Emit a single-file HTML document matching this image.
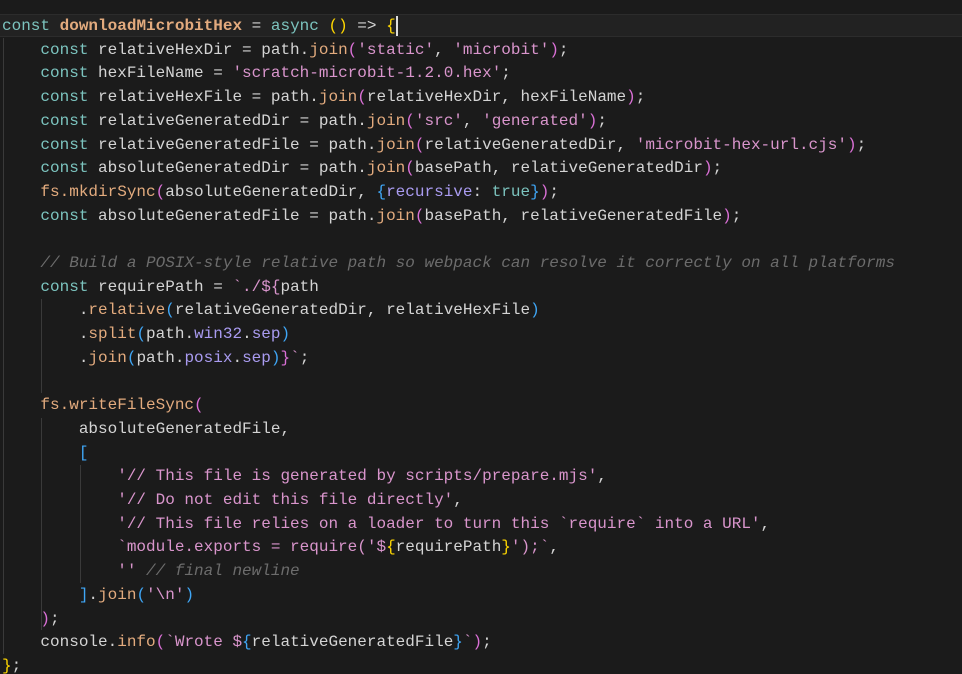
<!DOCTYPE html>
<html><head><meta charset="utf-8"><style>
html,body{margin:0;padding:0;background:#1b1b1b;width:962px;height:674px;overflow:hidden}
#ed{position:relative;width:962px;height:674px;font-family:"Liberation Mono",monospace;font-size:16px;color:#d4d4d4}
.l{position:absolute;left:2px;height:23.7px;line-height:23.7px;white-space:pre;margin-top:2px}
.hl{position:absolute;left:0;top:14px;width:962px;height:23px;background:#222;border-top:1px solid #2c2c2c;border-bottom:1px solid #2c2c2c;box-sizing:border-box}
.g{position:absolute;width:1px;background:#3a3a3a}
.k{color:#7cc4bf}.f{color:#e3ab7e}.s{color:#d995cc}.p{color:#a99bf0}.c{color:#6c6c6c;font-style:italic}
.y{color:#ffd700}.m{color:#da70d6}.b{color:#3fa6f5}
</style></head><body><div id="ed">
<div class="hl"></div>
<div class="g" style="left:3px;top:38px;height:616px"></div>
<div class="g" style="left:41px;top:299px;height:94px"></div>
<div class="g" style="left:41px;top:418px;height:212px"></div>
<div class="g" style="left:80px;top:465px;height:118px"></div>
<div class="l" style="top:13px"><span class="k">const</span> <b class="f">downloadMicrobitHex</b> = <span class="k">async</span> <span class="y">()</span> =&gt; <span class="y">{</span><span style="display:inline-block;width:2px;height:20px;background:#ddd;vertical-align:middle"></span></div>
<div class="l" style="top:36.7px">    <span class="k">const</span> relativeHexDir = path.<span class="f">join</span><span class="m">(</span><span class="s">'static'</span>, <span class="s">'microbit'</span><span class="m">)</span>;</div>
<div class="l" style="top:60.4px">    <span class="k">const</span> hexFileName = <span class="s">'scratch-microbit-1.2.0.hex'</span>;</div>
<div class="l" style="top:84.1px">    <span class="k">const</span> relativeHexFile = path.<span class="f">join</span><span class="m">(</span>relativeHexDir, hexFileName<span class="m">)</span>;</div>
<div class="l" style="top:107.8px">    <span class="k">const</span> relativeGeneratedDir = path.<span class="f">join</span><span class="m">(</span><span class="s">'src'</span>, <span class="s">'generated'</span><span class="m">)</span>;</div>
<div class="l" style="top:131.5px">    <span class="k">const</span> relativeGeneratedFile = path.<span class="f">join</span><span class="m">(</span>relativeGeneratedDir, <span class="s">'microbit-hex-url.cjs'</span><span class="m">)</span>;</div>
<div class="l" style="top:155.2px">    <span class="k">const</span> absoluteGeneratedDir = path.<span class="f">join</span><span class="m">(</span>basePath, relativeGeneratedDir<span class="m">)</span>;</div>
<div class="l" style="top:178.9px">    <span class="f">fs.mkdirSync</span><span class="m">(</span>absoluteGeneratedDir, <span class="b">{</span><span class="p">recursive</span>: <span class="k">true</span><span class="b">}</span><span class="m">)</span>;</div>
<div class="l" style="top:202.6px">    <span class="k">const</span> absoluteGeneratedFile = path.<span class="f">join</span><span class="m">(</span>basePath, relativeGeneratedFile<span class="m">)</span>;</div>
<div class="l" style="top:250px">    <span class="c">// Build a POSIX-style relative path so webpack can resolve it correctly on all platforms</span></div>
<div class="l" style="top:273.7px">    <span class="k">const</span> requirePath = <span class="s">`./${</span>path</div>
<div class="l" style="top:297.4px">        .<span class="f">relative</span><span class="b">(</span>relativeGeneratedDir, relativeHexFile<span class="b">)</span></div>
<div class="l" style="top:321.1px">        .<span class="f">split</span><span class="b">(</span>path.<span class="p">win32</span>.<span class="p">sep</span><span class="b">)</span></div>
<div class="l" style="top:344.8px">        .<span class="f">join</span><span class="b">(</span>path.<span class="p">posix</span>.<span class="p">sep</span><span class="b">)</span><span class="m">}</span><span class="s">`</span>;</div>
<div class="l" style="top:392.2px">    <span class="f">fs.writeFileSync</span><span class="m">(</span></div>
<div class="l" style="top:415.9px">        absoluteGeneratedFile,</div>
<div class="l" style="top:439.6px">        <span class="b">[</span></div>
<div class="l" style="top:463.3px">            <span class="s">'// This file is generated by scripts/prepare.mjs'</span>,</div>
<div class="l" style="top:487px">            <span class="s">'// Do not edit this file directly'</span>,</div>
<div class="l" style="top:510.7px">            <span class="s">'// This file relies on a loader to turn this `require` into a URL'</span>,</div>
<div class="l" style="top:534.4px">            <span class="s">`module.exports = require('$</span><span class="y">{</span>requirePath<span class="y">}</span><span class="s">');`</span>,</div>
<div class="l" style="top:558.1px">            <span class="s">''</span> <span class="c">// final newline</span></div>
<div class="l" style="top:581.8px">        <span class="b">]</span>.<span class="f">join</span><span class="b">(</span><span class="s">'\n'</span><span class="b">)</span></div>
<div class="l" style="top:605.5px">    <span class="m">)</span>;</div>
<div class="l" style="top:629.2px">    console.<span class="f">info</span><span class="m">(</span><span class="s">`Wrote $</span><span class="b">{</span>relativeGeneratedFile<span class="b">}</span><span class="s">`</span><span class="m">)</span>;</div>
<div class="l" style="top:652.9px"><span class="y">}</span>;</div>
</div></body></html>
